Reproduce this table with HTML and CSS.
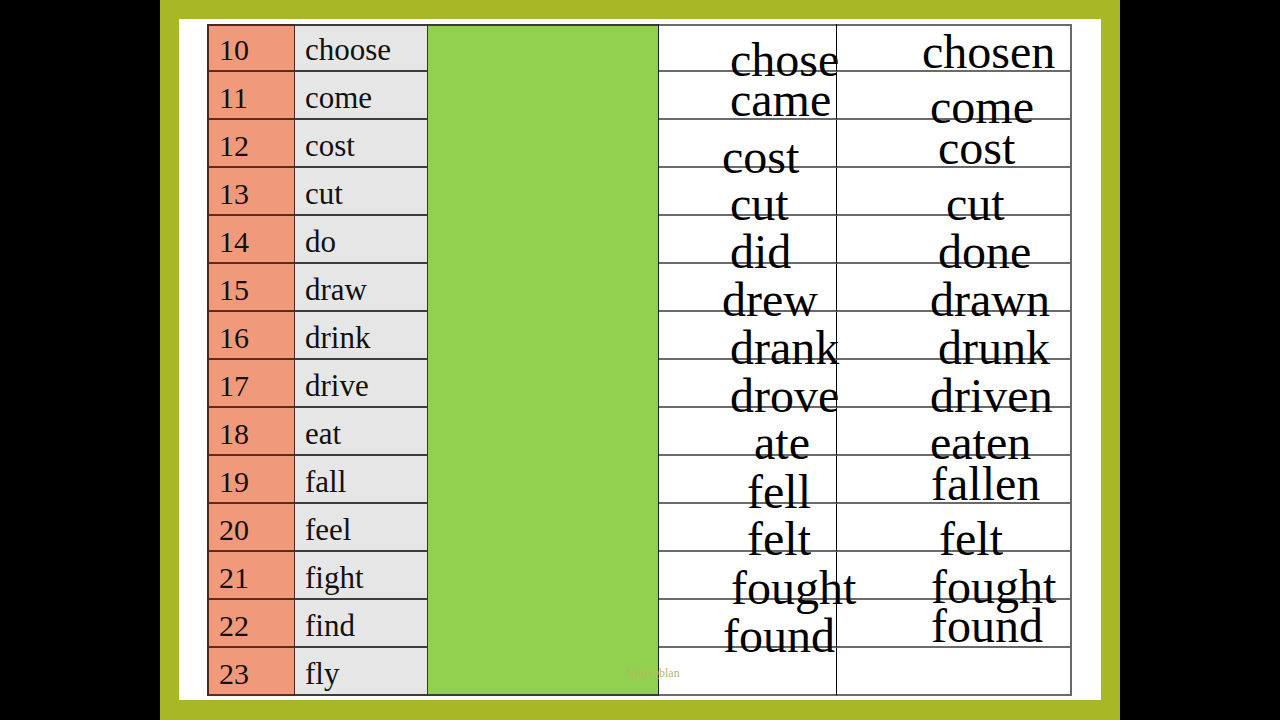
FILE: index.html
```html
<!DOCTYPE html>
<html lang="en">
<head>
<meta charset="utf-8">
<title>Irregular verbs 10-23</title>
<link rel="stylesheet" href="styles.css">
</head>
<body>
<div class="frame">
  <div class="slide">
    <div class="sheet">
      <div class="c num r1">10</div><div class="c verb r1">choose</div><div class="c blank r1"></div><div class="c past r1"></div><div class="c pp r1"></div>
      <div class="c num">11</div><div class="c verb">come</div><div class="c past"></div><div class="c pp"></div>
      <div class="c num">12</div><div class="c verb">cost</div><div class="c past"></div><div class="c pp"></div>
      <div class="c num">13</div><div class="c verb">cut</div><div class="c past"></div><div class="c pp"></div>
      <div class="c num">14</div><div class="c verb">do</div><div class="c past"></div><div class="c pp"></div>
      <div class="c num">15</div><div class="c verb">draw</div><div class="c past"></div><div class="c pp"></div>
      <div class="c num">16</div><div class="c verb">drink</div><div class="c past"></div><div class="c pp"></div>
      <div class="c num">17</div><div class="c verb">drive</div><div class="c past"></div><div class="c pp"></div>
      <div class="c num">18</div><div class="c verb">eat</div><div class="c past"></div><div class="c pp"></div>
      <div class="c num">19</div><div class="c verb">fall</div><div class="c past"></div><div class="c pp"></div>
      <div class="c num">20</div><div class="c verb">feel</div><div class="c past"></div><div class="c pp"></div>
      <div class="c num">21</div><div class="c verb">fight</div><div class="c past"></div><div class="c pp"></div>
      <div class="c num">22</div><div class="c verb">find</div><div class="c past"></div><div class="c pp"></div>
      <div class="c num">23</div><div class="c verb">fly</div><div class="c past"></div><div class="c pp"></div>

      <span class="w" style="left:523px;top:12px">chose</span>
      <span class="w" style="left:523px;top:52px">came</span>
      <span class="w" style="left:515px;top:109px">cost</span>
      <span class="w" style="left:523px;top:156px">cut</span>
      <span class="w" style="left:523px;top:204px">did</span>
      <span class="w" style="left:515px;top:252px">drew</span>
      <span class="w" style="left:523px;top:300px">drank</span>
      <span class="w" style="left:523px;top:348px">drove</span>
      <span class="w" style="left:547px;top:395px">ate</span>
      <span class="w" style="left:540px;top:444px">fell</span>
      <span class="w" style="left:540px;top:491px">felt</span>
      <span class="w" style="left:524px;top:540px">fought</span>
      <span class="w" style="left:516px;top:588px">found</span>

      <span class="w" style="left:715px;top:4px">chosen</span>
      <span class="w" style="left:723px;top:59px">come</span>
      <span class="w" style="left:731px;top:100px">cost</span>
      <span class="w" style="left:739px;top:156px">cut</span>
      <span class="w" style="left:731px;top:204px">done</span>
      <span class="w" style="left:723px;top:252px">drawn</span>
      <span class="w" style="left:731px;top:300px">drunk</span>
      <span class="w" style="left:723px;top:348px">driven</span>
      <span class="w" style="left:723px;top:395px">eaten</span>
      <span class="w" style="left:724px;top:436px">fallen</span>
      <span class="w" style="left:732px;top:491px">felt</span>
      <span class="w" style="left:724px;top:539px">fought</span>
      <span class="w" style="left:724px;top:578px">found</span>

      <span class="mark">Njm Qblan</span>
    </div>
  </div>
</div>
</body>
</html>
```
FILE: styles.css
```css
* { box-sizing: border-box; }
html, body { margin: 0; padding: 0; }
body {
  background: #000;
  width: 1280px;
  height: 720px;
  overflow: hidden;
  font-family: "Liberation Serif", "Times New Roman", serif;
}
.frame {
  width: 960px;
  height: 720px;
  margin-left: 160px;
  background: #a8b726;
  padding: 19px 19px 20px 19px;
}
.slide {
  width: 922px;
  height: 681px;
  background: #fff;
  padding: 5px 0 0 28px;
}
.sheet {
  position: relative;
  display: grid;
  grid-template-columns: 88px 133px 231px 178px 235px;
  grid-template-rows: repeat(14, 48px);
  width: 865px;
}
.c {
  border-bottom: 2px solid #3c3c3c;
  font-size: 30px;
  line-height: 46px;
  padding-top: 3px;
  color: #111;
  white-space: nowrap;
}
.r1 { box-shadow: inset 0 2px 0 #3c3c3c; }
.num {
  background: #f19a7b;
  border-left: 2px solid #4a2a20;
  border-right: 1px solid #4a2a20;
  border-bottom-color: #5a2c1e;
  padding-left: 10px;
}
.num.r1 { box-shadow: inset 0 2px 0 #4a2a20; }
.verb {
  background: #e6e6e6;
  border-right: 1px solid #333;
  padding-left: 10px;
  font-size: 31px;
}
.blank {
  grid-row: span 14;
  background: #92d050;
  border-right: 1px solid #222;
}
.past {
  background: #fff;
  border-right: 1px solid #000;
  border-bottom-color: #6a6a6a;
}
.pp {
  background: #fff;
  border-right: 2px solid #6a6a6a;
  border-bottom-color: #6a6a6a;
}
.past.r1, .pp.r1 { box-shadow: inset 0 2px 0 #6a6a6a; }
.w {
  position: absolute;
  font-size: 48px;
  line-height: 1;
  color: #000;
  white-space: nowrap;
}
.mark {
  position: absolute;
  left: 419px;
  top: 643px;
  font-size: 12px;
  line-height: 1;
  color: #b9b66a;
  white-space: nowrap;
}
```
